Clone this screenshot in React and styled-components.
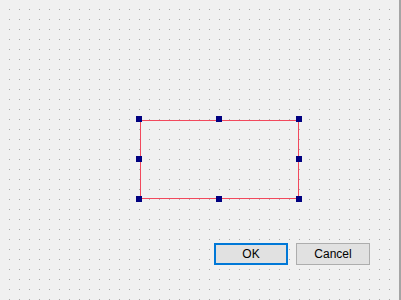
import React from 'react';
import styled, { createGlobalStyle } from 'styled-components';

const GlobalStyle = createGlobalStyle`
  html, body {
    margin: 0;
    padding: 0;
    background: #f0f0f0;
  }
`;

// Form canvas with Qt Designer style dot grid
const Canvas = styled.div`
  position: relative;
  box-sizing: border-box;
  width: 401px;
  height: 300px;
  border-right: 2px solid #a5a5a5;
  background-color: #f0f0f0;
  background-image:
    linear-gradient(to right, #f0f0f0 9px, transparent 9px),
    linear-gradient(to bottom, #f0f0f0 9px, #a8a8a8 9px);
  background-size: 10px 10px;
  display: flex;
  flex-direction: column;
  justify-content: flex-end;
  padding: 0 29px 35px 0;
  font-family: 'Segoe UI', 'Liberation Sans', Arial, sans-serif;
`;

// selected widget: red outline plus 8 resize handles
const Selection = styled.div`
  position: absolute;
  left: 139px;
  top: 119px;
  width: 160px;
  height: 80px;

  &::before {
    content: '';
    position: absolute;
    left: 1px;
    top: 1px;
    width: 159px;
    height: 79px;
    box-sizing: border-box;
    border: 1px solid #f2485c;
  }
`;

const Handle = styled.span`
  position: absolute;
  width: 6px;
  height: 6px;
  background: #000080;
  left: ${p => p.x}%;
  top: ${p => p.y}%;
  margin: -3px 0 0 -3px;
`;

const ButtonRow = styled.div`
  display: flex;
  justify-content: flex-end;
  gap: 8px;
`;

const Button = styled.button`
  box-sizing: border-box;
  width: 74px;
  height: 22px;
  padding: 0;
  background: #e1e1e1;
  border: ${p => (p.primary ? '2px solid #0078d7' : '1px solid #adadad')};
  border-radius: 0;
  color: #000;
  font-family: inherit;
  font-size: 12px;
  line-height: 1;
`;

const handles = [
  [0, 0], [50, 0], [100, 0],
  [0, 50], [100, 50],
  [0, 100], [50, 100], [100, 100]
];

export default function App() {
  return (
    <>
      <GlobalStyle />
      <Canvas>
        <Selection>
          {handles.map(([x, y]) => (
            <Handle key={`${x}-${y}`} x={x} y={y} />
          ))}
        </Selection>
        <ButtonRow>
          <Button primary>OK</Button>
          <Button>Cancel</Button>
        </ButtonRow>
      </Canvas>
    </>
  );
}
